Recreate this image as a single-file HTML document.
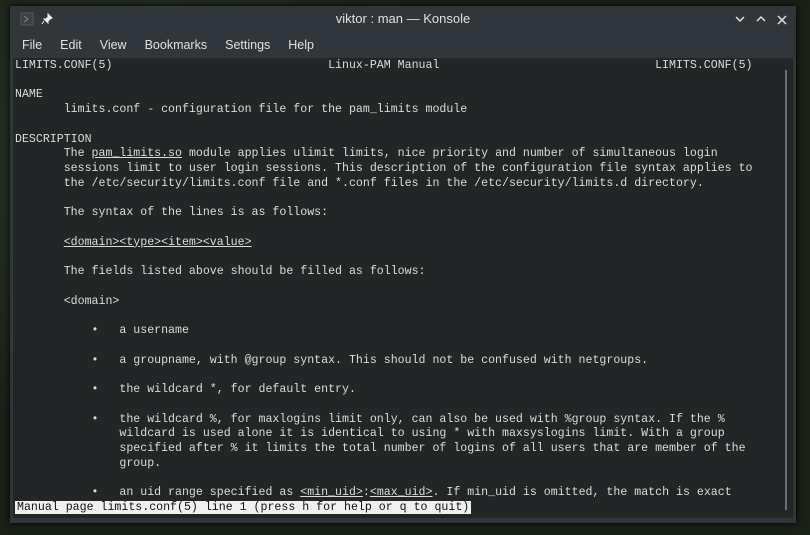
<!DOCTYPE html>
<html><head><meta charset="utf-8"><style>
html,body{margin:0;padding:0;width:810px;height:535px;overflow:hidden;background:#1c2419;font-family:"Liberation Sans",sans-serif}
.bg{position:absolute;inset:0;background:radial-gradient(circle at 20% 30%,#2e3a2a 0,#1a2118 40%),#1a2118}
.win{position:absolute;left:10px;top:6px;width:786px;height:517px;background:#31363b;box-shadow:0 0 6px #000}
.title{position:absolute;left:0;top:0;width:100%;height:26px;color:#dfe1e3;font-size:13px;text-align:center;line-height:26px}
.menu{position:absolute;left:12px;top:32px;font-size:12.5px;color:#dfe1e3}
.menu span{margin-right:18px}
.term{position:absolute;left:3px;top:52px;width:780px;height:460px;background:#232627}
pre{position:absolute;left:2px;top:1px;margin:0;font-family:"Liberation Mono",monospace;font-size:11.6px;line-height:14.73px;color:#dcdcdc}
u{text-decoration:underline}
.sb{position:absolute;left:772px;top:12px;width:2px;height:440px;background:#6a6e72}
.st{background:#f0f0f0;color:#111;padding:0 2px}
</style></head><body><div class="bg"></div>
<div class="win">
<div class="title">viktor : man — Konsole</div>
<svg style="position:absolute;left:10px;top:6px" width="14" height="14"><path d="M1 1h12v12H1z" fill="#3b4045" stroke="#55595d"/><path d="M4 4l4 3-4 3" stroke="#888" fill="none"/></svg>
<svg style="position:absolute;left:31px;top:7px" width="12" height="12"><path d="M7 1l4 4-2 1-2 2 0 2-4-4 2 0 2-2z M3 8l-2 3" stroke="#eee" fill="#eee"/></svg>
<svg style="position:absolute;left:724px;top:8px" width="56" height="12" stroke="#dfe1e3" stroke-width="1.5" fill="none"><path d="M2 3l4 4 4-4"/><path d="M23 7l4-4 4 4"/><path d="M44 2l8 8M52 2l-8 8"/></svg>
<div class="menu"><span>File</span><span>Edit</span><span>View</span><span>Bookmarks</span><span>Settings</span><span>Help</span></div>
<div class="term"><div class="sb"></div>
<pre>LIMITS.CONF(5)                               Linux-PAM Manual                               LIMITS.CONF(5)

NAME
       limits.conf - configuration file for the pam_limits module

DESCRIPTION
       The <u>pam_limits.so</u> module applies ulimit limits, nice priority and number of simultaneous login
       sessions limit to user login sessions. This description of the configuration file syntax applies to
       the /etc/security/limits.conf file and *.conf files in the /etc/security/limits.d directory.

       The syntax of the lines is as follows:

       <u>&lt;domain&gt;&lt;type&gt;&lt;item&gt;&lt;value&gt;</u>

       The fields listed above should be filled as follows:

       &lt;domain&gt;

           •   a username

           •   a groupname, with @group syntax. This should not be confused with netgroups.

           •   the wildcard *, for default entry.

           •   the wildcard %, for maxlogins limit only, can also be used with %group syntax. If the %
               wildcard is used alone it is identical to using * with maxsyslogins limit. With a group
               specified after % it limits the total number of logins of all users that are member of the
               group.

           •   an uid range specified as <u>&lt;min_uid&gt;</u>:<u>&lt;max_uid&gt;</u>. If min_uid is omitted, the match is exact
<span class="st">Manual page limits.conf(5) line 1 (press h for help or q to quit)</span></pre>
</div></div>
</body></html>
